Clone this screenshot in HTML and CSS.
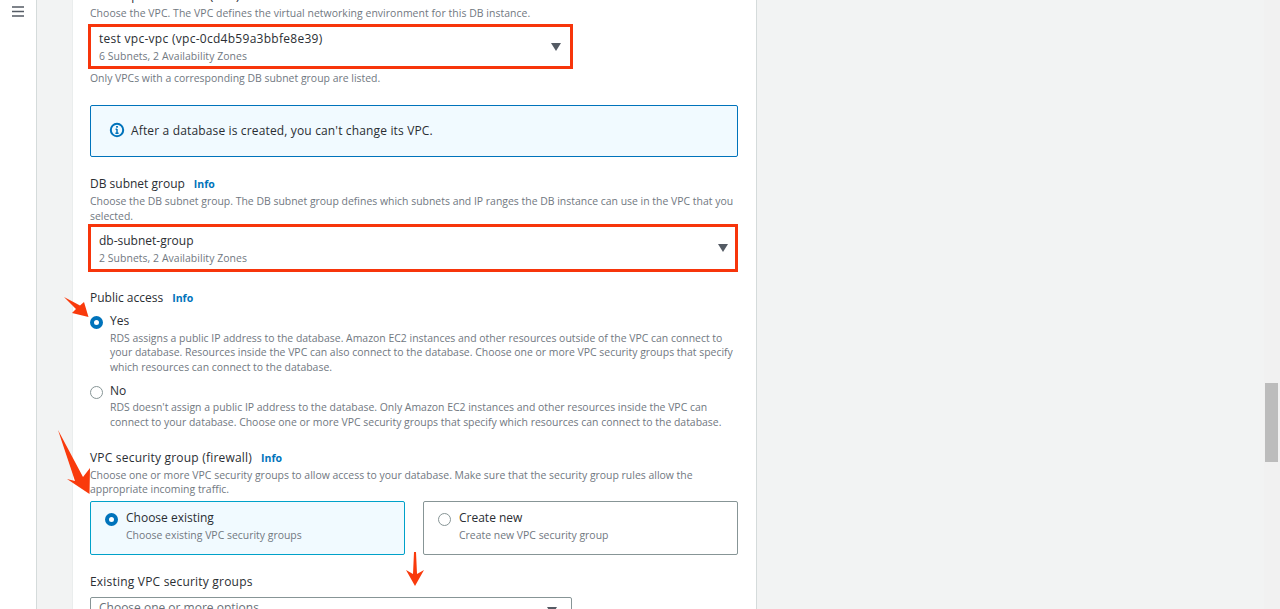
FILE: index.html
```html
<!DOCTYPE html>
<html lang="en">
<head>
<meta charset="utf-8">
<title>DB connectivity</title>
<link rel="stylesheet" href="styles.css">
</head>
<body>
<div class="app">
  <aside class="rail">
    <svg class="menu" width="12" height="11" viewBox="0 0 12 11"><path d="M0 1h12M0 5.500h12M0 10h12" fill="none" stroke="#545b64" stroke-width="1.500"/></svg>
  </aside>
  <main class="main">
    <section class="card">
      <div class="field first">
        <div class="label wide-text">Virtual private cloud (VPC)<a class="info">Info</a></div>
        <div class="help spaced">Choose the VPC. The VPC defines the virtual networking environment for this DB instance.</div>
        <div class="select marked short">
          <div class="value long">test vpc-vpc (vpc-0cd4b59a3bbfe8e39)</div>
          <div class="sub">6 Subnets, 2 Availability Zones</div>
          <span class="caret"></span>
        </div>
        <div class="help below">Only VPCs with a corresponding DB subnet group are listed.</div>
      </div>
      <div class="alert">
        <svg width="16" height="16" viewBox="0 0 16 16"><circle cx="8" cy="8" r="6.200" fill="none" stroke="#0073bb" stroke-width="2"/><path d="M8 7v4.200M6.400 11.300h3.200M6.600 7.200H8" fill="none" stroke="#0073bb" stroke-width="1.500"/><rect x="7.100" y="4" width="1.800" height="1.700" fill="#0073bb"/></svg>
        <span>After a database is created, you can't change its VPC.</span>
      </div>
      <div class="field subnet">
        <div class="label">DB subnet group<a class="info">Info</a></div>
        <div class="help">Choose the DB subnet group. The DB subnet group defines which subnets and IP ranges the DB instance can use in the VPC that you selected.</div>
        <div class="select marked wide">
          <div class="value">db-subnet-group</div>
          <div class="sub">2 Subnets, 2 Availability Zones</div>
          <span class="caret"></span>
        </div>
      </div>
      <div class="field public">
        <div class="label">Public access<a class="info">Info</a></div>
        <div class="radio-row yes">
          <span class="radio on"></span>
          <div>
            <div class="radio-title">Yes</div>
            <div class="radio-desc">RDS assigns a public IP address to the database. Amazon EC2 instances and other resources outside of the VPC can connect to your database. Resources inside the VPC can also connect to the database. Choose one or more VPC security groups that specify which resources can connect to the database.</div>
          </div>
        </div>
        <div class="radio-row no">
          <span class="radio"></span>
          <div>
            <div class="radio-title">No</div>
            <div class="radio-desc">RDS doesn't assign a public IP address to the database. Only Amazon EC2 instances and other resources inside the VPC can connect to your database. Choose one or more VPC security groups that specify which resources can connect to the database.</div>
          </div>
        </div>
      </div>
      <div class="field firewall">
        <div class="label wide-text">VPC security group (firewall)<a class="info">Info</a></div>
        <div class="help">Choose one or more VPC security groups to allow access to your database. Make sure that the security group rules allow the appropriate incoming traffic.</div>
        <div class="tiles">
          <div class="tile active">
            <span class="radio on"></span>
            <div>
              <div class="radio-title">Choose existing</div>
              <div class="tile-sub">Choose existing VPC security groups</div>
            </div>
          </div>
          <div class="tile">
            <span class="radio"></span>
            <div>
              <div class="radio-title">Create new</div>
              <div class="tile-sub">Create new VPC security group</div>
            </div>
          </div>
        </div>
      </div>
      <div class="field existing">
        <div class="label wide-text">Existing VPC security groups</div>
        <div class="select short plain">
          <div class="placeholder">Choose one or more options</div>
          <span class="caret"></span>
        </div>
      </div>
    </section>
  </main>
  <div class="scrollbar"><div class="thumb"></div></div>
</div>
<svg class="marks" width="1280" height="609" viewBox="0 0 1280 609">
  <polygon points="64,297 80,305.500 84,302 88.500,317 72,313 76,309" />
  <polygon points="58,430 83,477 90,468 89.500,494 67,479 75,481" />
  <polygon points="414,552 416,552 417,574 424,570 415,586 406,570 413,574" />
</svg>
</body>
</html>
```
FILE: styles.css
```css
* { box-sizing: border-box; }
html, body { margin: 0; height: 100%; overflow: hidden; }
body {
  position: relative;
  background: #f2f3f3;
  color: #16191f;
  font-family: "Open Sans", "Noto Sans", sans-serif;
  font-size: 12px;
}
.app { display: flex; height: 609px; overflow: hidden; }
.rail {
  flex: 0 0 37px;
  background: #fff;
  border-right: 1px solid #d5dbdb;
  display: flex;
  justify-content: center;
  align-items: flex-start;
  padding: 6px 1px 0 0;
}
.main { flex: 1; padding-left: 35px; }
.card {
  width: 685px;
  height: 650px;
  margin-top: -21px;
  background: #fff;
  border: 1px solid #eaeded;
  border-right-color: #d5dbdb;
  padding: 8px 18px 0 17px;
}
.label { font-size: 12px; line-height: 16px; color: #2a2e33; }
.wide-text { letter-spacing: 0.2px; }
.info { margin-left: 9px; color: #0073bb; font-size: 10.500px; font-weight: 700; letter-spacing: 0; }
.help, .radio-desc, .tile-sub, .sub {
  font-size: 10.450px;
  line-height: 14.500px;
  color: #71787f;
}
.help { margin-top: 2px; }
.help.spaced { letter-spacing: 0.05px; }
.help.below { margin-top: 2px; }
.select { position: relative; background: #fff; }
.marked {
  border: 3px solid #f7350b;
  margin: 3px 0 0 -2px;
  padding: 3px 8px 0;
}
.short { width: 485px; height: 45px; }
.wide { width: 650px; height: 48px; margin-top: 1px; padding-top: 5px; }
.value { font-size: 12px; line-height: 17px; color: #2a2e33; }
.value.long { letter-spacing: 0.28px; }
.sub { margin-top: 2px; letter-spacing: 0.05px; }
.caret {
  position: absolute;
  right: 9px;
  top: 16px;
  border-style: solid;
  border-width: 8px 5px 0;
  border-color: #545b64 transparent transparent;
}
.wide .caret { right: 7px; top: 17px; }
.alert {
  margin-top: 20px;
  height: 52px;
  width: 648px;
  display: flex;
  align-items: center;
  gap: 6px;
  padding: 0 0 2px 18px;
  background: #f1faff;
  border: 1px solid #0073bb;
  border-radius: 2px;
  font-size: 12px;
  letter-spacing: 0.15px;
  color: #2a2e33;
}
.subnet { margin-top: 19px; }
.public { margin-top: 18px; }
.radio-row { display: flex; gap: 7px; }
.yes { margin-top: 7px; }
.no { margin-top: 8.500px; }
.radio {
  flex: none;
  width: 13px;
  height: 13px;
  margin-top: 3px;
  border-radius: 50%;
  border: 1px solid #879596;
  background: #fff;
}
.radio.on { border: 4px solid #0073bb; }
.radio-title { font-size: 12px; line-height: 16px; color: #2a2e33; }
.radio-desc { margin-top: 1.500px; }
.firewall { margin-top: 20.500px; }
.tiles { display: flex; gap: 18px; margin-top: 4px; width: 648px; }
.tile {
  flex: 1;
  height: 54px;
  display: flex;
  gap: 8px;
  padding: 8px 14px;
  border: 1px solid #879596;
  border-radius: 2px;
}
.tile .radio { margin-top: 3px; }
.tile.active { background: #f1faff; border-color: #00a1c9; }
.tile-sub { margin-top: 2px; }
.existing { margin-top: 19px; }
.plain {
  border: 1px solid #879596;
  border-radius: 2px;
  margin-top: 7px;
  width: 482px;
  height: 40px;
  padding: 2px 8px;
}
.placeholder { font-size: 12px; line-height: 16px; color: #687078; }
.plain .caret { top: 9px; right: 14px; }
.scrollbar { position: absolute; top: 0; right: 0; bottom: 0; width: 16px; background: #f1f1f1; }
.thumb { position: absolute; top: 383px; left: 1px; width: 13px; height: 79px; background: #bcbcbc; }
.marks { position: absolute; left: 0; top: 0; fill: #f93a0c; pointer-events: none; }
```
